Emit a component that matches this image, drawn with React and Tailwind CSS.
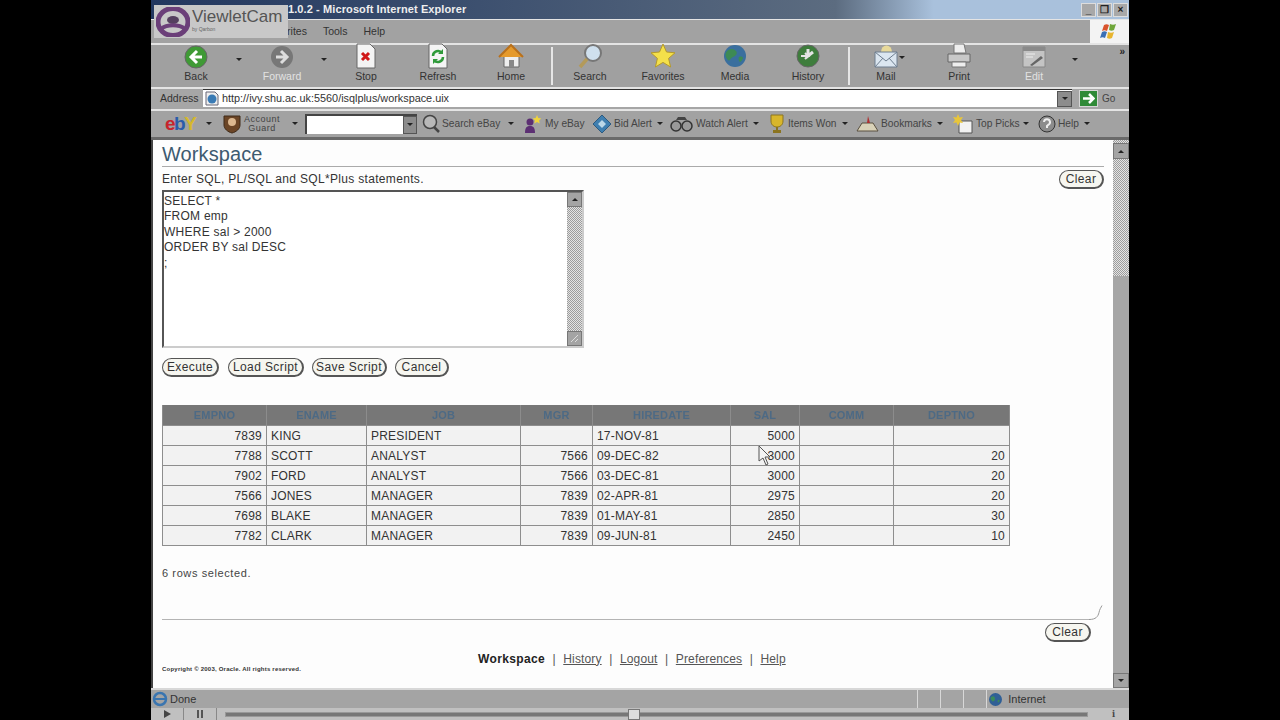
import React from "react";

const sans = "font-['Liberation_Sans',Arial,sans-serif]";

const cols = [104, 100, 154, 72, 138, 69, 94, 116];
const headers = ["EMPNO", "ENAME", "JOB", "MGR", "HIREDATE", "SAL", "COMM", "DEPTNO"];
const rows = [
  ["7839", "KING", "PRESIDENT", "", "17-NOV-81", "5000", "", ""],
  ["7788", "SCOTT", "ANALYST", "7566", "09-DEC-82", "3000", "", "20"],
  ["7902", "FORD", "ANALYST", "7566", "03-DEC-81", "3000", "", "20"],
  ["7566", "JONES", "MANAGER", "7839", "02-APR-81", "2975", "", "20"],
  ["7698", "BLAKE", "MANAGER", "7839", "01-MAY-81", "2850", "", "30"],
  ["7782", "CLARK", "MANAGER", "7839", "09-JUN-81", "2450", "", "10"],
];
const rightAligned = [0, 3, 5, 6, 7];

function Caret({ className = "" }) {
  return <span className={`inline-block w-0 h-0 border-l-[3px] border-r-[3px] border-t-[3px] border-l-transparent border-r-transparent border-t-[#222] ${className}`} />;
}

/* main toolbar icons */
const BackIcon = ({ fill = "#3f9a35" }) => (
  <svg width="24" height="24" viewBox="0 0 24 24">
    <circle cx="12" cy="12" r="11" fill={fill} stroke="#666" />
    <path d="M13 6l-6 6 6 6M7 12h11" fill="none" stroke="#fff" strokeWidth="3" />
  </svg>
);
const ForwardIcon = () => (
  <svg width="24" height="24" viewBox="0 0 24 24">
    <circle cx="12" cy="12" r="11" fill="#777" />
    <path d="M11 6l6 6-6 6M17 12H6" fill="none" stroke="#ddd" strokeWidth="3" />
  </svg>
);
const StopIcon = () => (
  <svg width="22" height="26" viewBox="0 0 22 26">
    <path d="M2 1h13l5 5v19H2z" fill="#f4f4f4" stroke="#666" />
    <path d="M7 10l7 7M14 10l-7 7" stroke="#d01818" strokeWidth="3" />
  </svg>
);
const RefreshIcon = () => (
  <svg width="22" height="26" viewBox="0 0 22 26">
    <path d="M2 1h13l5 5v19H2z" fill="#f4f4f4" stroke="#666" />
    <path d="M6 13a5 5 0 0 1 9-3M16 14a5 5 0 0 1-9 3" fill="none" stroke="#2f9a3a" strokeWidth="2.5" />
    <path d="M16 6v5h-5zM6 21v-5h5z" fill="#2f9a3a" />
  </svg>
);
const HomeIcon = () => (
  <svg width="26" height="26" viewBox="0 0 26 26">
    <path d="M6 12v12h15V12z" fill="#eee" stroke="#666" />
    <path d="M1 14L13 2l12 12" fill="#e59a2c" stroke="#b8701c" strokeWidth="2" />
    <path d="M11 17h5v7h-5z" fill="#888" />
  </svg>
);
const SearchIcon = () => (
  <svg width="26" height="26" viewBox="0 0 26 26">
    <circle cx="16" cy="10" r="8" fill="#cfe0ee" stroke="#777" strokeWidth="2" />
    <path d="M10 16l-7 8" stroke="#b39a5a" strokeWidth="3.5" />
  </svg>
);
const StarIcon = () => (
  <svg width="26" height="26" viewBox="0 0 26 26">
    <path d="M13 1l3.5 8 8.5.8-6.4 5.6 2 8.6-7.6-4.6L5.400 24l2-8.600L1 9.800 9.500 9z" fill="#f4e04a" stroke="#b59a2a" />
  </svg>
);
const MediaIcon = () => (
  <svg width="26" height="26" viewBox="0 0 26 26">
    <circle cx="13" cy="13" r="11" fill="#3a6f9e" />
    <path d="M5 8c4-3 7-2 9 0s0 5-3 6-3 5-5 3-4-6-1-9zM17 14c2-1 4 0 4 1s-2 4-3 4-2-4-1-5z" fill="#3d8a55" />
  </svg>
);
const HistoryIcon = () => (
  <svg width="26" height="26" viewBox="0 0 26 26">
    <circle cx="13" cy="13" r="11" fill="#3e7d3c" stroke="#666" />
    <path d="M13 6v7l5-4" fill="none" stroke="#e4e4e4" strokeWidth="3" />
    <path d="M6 13h7l-3-3M13 13l-3 3" fill="none" stroke="#e4e4e4" strokeWidth="2" />
  </svg>
);
const MailIcon = () => (
  <svg width="26" height="26" viewBox="0 0 26 26">
    <path d="M8 9a5 6 0 0 1 11 0z" fill="#e8d99a" />
    <path d="M2 9h22v15H2z" fill="#dbe6f0" stroke="#6f7f90" />
    <path d="M2 9l11 9 11-9M2 24l8-9M24 24l-8-9" fill="none" stroke="#6f7f90" />
  </svg>
);
const PrintIcon = () => (
  <svg width="26" height="26" viewBox="0 0 26 26">
    <path d="M8 1h10l2 9H8z" fill="#eee" stroke="#777" />
    <path d="M2 11h22v8H2z" fill="#c8c8c8" stroke="#666" />
    <path d="M6 19h14v5H6z" fill="#eee" stroke="#777" />
  </svg>
);
const EditIcon = () => (
  <svg width="24" height="24" viewBox="0 0 24 24">
    <path d="M1 2h22v20H1z" fill="#c4c4c4" stroke="#888" />
    <path d="M1 2h22v4H1z" fill="#8a8a8a" />
    <path d="M4 9h9M4 12h7" stroke="#eee" />
    <path d="M8 20l11-9 2 2-11 8z" fill="#666" />
  </svg>
);

function ToolButton({ icon, label, dim, caret, className = "" }) {
  return (
    <div className={`relative w-[72px] h-full flex flex-col items-center justify-end shrink-0 ${className}`}>
      <div className="h-[26px] flex items-center justify-center">{icon}</div>
      {caret && <Caret className="absolute left-[49px] top-[11px]" />}
      <span className={`text-[10.5px] leading-[13px] mt-[1px] mb-[4px] ${dim ? "text-[#e2e2e2]" : "text-[#333]"}`}>{label}</span>
    </div>
  );
}

function Seam({ className = "w-[14px]" }) {
  return <div className={`${className} shrink-0 flex justify-center pb-[14px]`}><Caret /></div>;
}

function Divider({ className = "" }) {
  return <div className={`w-[2px] h-[38px] bg-[#e6e6e6] shrink-0 ${className}`} />;
}

/* link bar items */
function LinkItem({ label, caret = true, caretGap = "ml-[5px]" }) {
  return (
    <div className="flex items-center shrink-0">
      <span className="text-[10.2px] text-[#444] whitespace-nowrap">{label}</span>
      {caret && <Caret className={caretGap} />}
    </div>
  );
}

function PillButton({ children, className = "" }) {
  return (
    <div className={`h-[19px] flex items-center justify-center rounded-full border border-[#555] border-r-2 border-b-2 bg-[#f6f6f0] text-[12px] tracking-[0.4px] text-[#333] shrink-0 ${className}`}>
      {children}
    </div>
  );
}

const dither = "bg-[repeating-conic-gradient(#9c9c9c_0_25%,#e4e4e4_0_50%)] bg-[length:2px_2px]";

function ScrollBox({ children, className = "" }) {
  return <div className={`flex items-center justify-center bg-[#a4a4a4] border border-[#777] ${className}`}>{children}</div>;
}

function Logo() {
  return (
    <div className="absolute left-[154px] top-[5px] w-[134px] h-[33px] bg-[#c8c8c8] flex items-center pl-[2px]">
      <svg width="34" height="30" viewBox="0 0 34 30">
        <ellipse cx="17" cy="15" rx="15" ry="13.500" fill="none" stroke="#6b3f79" strokeWidth="5" />
        <ellipse cx="17" cy="13" rx="6" ry="4" fill="#55405f" />
        <path d="M5 22c6-5 18-5 24 0" fill="none" stroke="#6b3f79" strokeWidth="4" />
      </svg>
      <div className="ml-[2px] -mt-[5px] flex flex-col">
        <span className="text-[17px] leading-[20px] text-[#555]">ViewletCam</span>
        <span className="text-[5px] leading-[5px] text-[#666]">by Qarbon</span>
      </div>
    </div>
  );
}

export default function App() {
  return (
    <div className={`relative w-[1280px] h-[720px] overflow-hidden bg-black flex justify-center ${sans}`}>
      <div className="w-[978px] h-full flex flex-col">
        {/* Title bar */}
        <div className="h-[19px] shrink-0 flex items-center justify-between pl-[137px] pr-[1px] bg-gradient-to-r from-[#22375f] via-[#5c6c80] via-70% to-[#a9c1dc] to-80%">
          <span className="text-[11px] font-bold text-[#eee] tracking-[0.1px]">1.0.2 - Microsoft Internet Explorer</span>
          <div className="flex gap-[1px]">
            {["_", "❐", "×"].map((c) => (
              <div key={c} className="w-[15px] h-[14px] bg-[#a8a8a8] border border-[#ddd] flex items-center justify-center text-[10px] leading-none font-bold text-[#222]">{c}</div>
            ))}
          </div>
        </div>

        {/* Menu bar */}
        <div className="h-[24px] shrink-0 flex items-center justify-between bg-[#a2a2a2] border-t border-[#e4e4e4]">
          <div className="flex text-[10.5px] text-[#333] pl-[125px] gap-[16px]">
            <span>vorites</span>
            <span>Tools</span>
            <span>Help</span>
          </div>
          <div className="w-[39px] h-full bg-[#f3f3f3] flex items-center justify-center">
            <svg width="20" height="18" viewBox="0 0 20 18">
              <path d="M4 2c2-1 3-1 5 0L7 8C5 7 4 7 2 8z" fill="#d9532c" />
              <path d="M10 1c2 1 4 1 6 0l-2 6c-2 1-3 1-5 0z" fill="#6fa63a" />
              <path d="M2 9c2-1 3-1 5 0l-2 6c-2-1-3-1-5 0z" fill="#3b6fb5" />
              <path d="M8 9c2 1 4 1 6 0l-2 6c-2 1-3 1-5 0z" fill="#e8b52f" />
            </svg>
          </div>
        </div>

        {/* Main toolbar */}
        <div className="relative h-[44px] shrink-0 flex items-center bg-[#a0a0a0] border-t-2 border-[#e4e4e4] pl-[9px]">
          <ToolButton icon={<BackIcon />} label="Back" />
          <Seam />
          <ToolButton icon={<ForwardIcon />} label="Forward" dim />
          <Seam className="w-[12px]" />
          <ToolButton icon={<StopIcon />} label="Stop" />
          <ToolButton icon={<RefreshIcon />} label="Refresh" />
          <ToolButton icon={<HomeIcon />} label="Home" className="ml-[1px]" />
          <Divider className="ml-[4px]" />
          <ToolButton icon={<SearchIcon />} label="Search" className="ml-[1px]" />
          <ToolButton icon={<StarIcon />} label="Favorites" className="ml-[1px]" />
          <ToolButton icon={<MediaIcon />} label="Media" />
          <ToolButton icon={<HistoryIcon />} label="History" className="ml-[1px]" />
          <Divider className="ml-[4px]" />
          <ToolButton icon={<MailIcon />} label="Mail" caret />
          <ToolButton icon={<PrintIcon />} label="Print" className="ml-[1px]" />
          <ToolButton icon={<EditIcon />} label="Edit" dim className="ml-[3px]" />
          <Seam className="w-[14px] -ml-[2px]" />
          <span className="absolute right-[4px] top-[2px] text-[10px] font-bold leading-none text-[#222]">»</span>
        </div>

        {/* Address bar */}
        <div className="h-[22px] shrink-0 flex items-center bg-[#a6a6a6] border-t-2 border-[#e4e4e4] pl-[9px]">
          <span className="w-[43px] -mt-[1px] text-[10.5px] text-[#333]">Address</span>
          <div className="w-[869px] h-[18px] self-start flex items-center bg-white border-t border-[#333]">
            <svg className="ml-[1px]" width="16" height="15" viewBox="0 0 16 15">
              <path d="M2 1h9l3 3v10H2z" fill="#eee" stroke="#667" />
              <circle cx="8" cy="8" r="4.500" fill="#3a7bb5" />
            </svg>
            <span className="ml-[2px] text-[10.85px] text-[#333]">http://ivy.shu.ac.uk:5560/isqlplus/workspace.uix</span>
            <div className="ml-auto w-[15px] h-[16px] bg-[#8c8c8c] border border-[#555] flex items-center justify-center"><Caret /></div>
          </div>
          <div className="ml-[7px] -mt-[1px] w-[19px] h-[17px] bg-[#2f8a37] border border-[#d6d6d6] flex items-center justify-center">
            <svg width="13" height="11" viewBox="0 0 13 11"><path d="M7 1l4.500 4.500L7 10M11 5.500H1" fill="none" stroke="#fff" strokeWidth="2.500" /></svg>
          </div>
          <span className="ml-[4px] -mt-[1px] text-[10px] text-[#444]">Go</span>
        </div>

        {/* eBay toolbar */}
        <div className="h-[31px] shrink-0 flex items-center bg-[#a2a2a2] border-t-2 border-[#e4e4e4] border-b-[3px] border-b-[#6a6a6a] pb-[1px] pl-[14px]">
          <div className="w-[44px] shrink-0 flex items-center text-[19px] font-bold leading-none tracking-[-1.5px]">
            <span className="text-[#c8242c]">e</span><span className="text-[#2a5caa]">b</span><span className="text-[#d4b82c]">Y</span>
            <Caret className="ml-[11px] shrink-0" />
          </div>
          <svg className="ml-[14px] shrink-0" width="18" height="20" viewBox="0 0 18 20">
            <path d="M1 2h16v9c0 4-4 7-8 8-4-1-8-4-8-8z" fill="#6b4526" stroke="#3f2a18" />
            <circle cx="9" cy="8" r="4" fill="#dcb890" />
          </svg>
          <div className="w-[38px] ml-[2px] shrink-0 text-[9px] leading-[9px] tracking-[0.5px] text-[#444] text-center">Account<br />Guard</div>
          <Caret className="ml-[11px] shrink-0" />
          <div className="ml-[7px] w-[112px] h-[20px] shrink-0 flex bg-white border-t-2 border-l-2 border-[#444]">
            <div className="ml-auto w-[14px] h-full bg-[#8c8c8c] border border-[#555] flex items-center justify-center"><Caret /></div>
          </div>
          <svg className="ml-[5px] shrink-0" width="18" height="20" viewBox="0 0 18 20">
            <circle cx="8" cy="8" r="6.500" fill="#b8b8b8" stroke="#444" strokeWidth="1.500" />
            <path d="M12 13l5 5" stroke="#444" strokeWidth="2.500" />
          </svg>
          <div className="ml-[2px] w-[78px] shrink-0"><LinkItem label="Search eBay" caretGap="ml-[8px]" /></div>
          <svg className="ml-[3px] shrink-0" width="19" height="20" viewBox="0 0 19 20">
            <circle cx="7" cy="8" r="3.500" fill="#5c2f73" />
            <path d="M2 19c0-6 2-7 5-7s5 1 5 7z" fill="#5c2f73" />
            <path d="M14 1l1.300 3 3 .4-2.200 2 .6 3-2.700-1.500-2.700 1.500.6-3-2.200-2 3-.4z" fill="#f0d43c" />
          </svg>
          <div className="ml-[3px] w-[47px] shrink-0"><LinkItem label="My eBay" caret={false} /></div>
          <svg className="shrink-0" width="20" height="20" viewBox="0 0 20 20">
            <path d="M10 1l9 9-9 9-9-9z" fill="#3f7fb0" stroke="#2c5a80" />
            <path d="M6 10l4-4 4 4-4 4z" fill="#bcd8e8" />
          </svg>
          <div className="ml-[2px] w-[56px] shrink-0"><LinkItem label="Bid Alert" /></div>
          <svg className="shrink-0" width="23" height="16" viewBox="0 0 23 16">
            <circle cx="6" cy="10" r="5" fill="#999" stroke="#333" strokeWidth="1.500" />
            <circle cx="17" cy="10" r="5" fill="#999" stroke="#333" strokeWidth="1.500" />
            <path d="M6 4l2-3h7l2 3z" fill="#444" />
          </svg>
          <div className="ml-[3px] w-[72px] shrink-0"><LinkItem label="Watch Alert" /></div>
          <svg className="shrink-0" width="18" height="20" viewBox="0 0 18 20">
            <path d="M3 1h12v6c0 4-3 6-6 6s-6-2-6-6z" fill="#d8b62c" stroke="#8b7420" />
            <path d="M8 13h2v3h3v3H5v-3h3z" fill="#8b7420" />
          </svg>
          <div className="ml-[2px] w-[68px] shrink-0"><LinkItem label="Items Won" /></div>
          <svg className="shrink-0" width="23" height="18" viewBox="0 0 23 18">
            <path d="M1 16L6 8h11l5 8z" fill="#d9d2b8" stroke="#5a5040" />
            <path d="M11 8l1-7 2 7z" fill="#b03030" />
          </svg>
          <div className="ml-[2px] w-[72px] shrink-0"><LinkItem label="Bookmarks" /></div>
          <svg className="shrink-0" width="20" height="20" viewBox="0 0 20 20">
            <path d="M6 7h13v12H6z" fill="#f2f2f2" stroke="#555" />
            <path d="M5 0l1.500 3.500L10 3 8 6l2 3-3.500-.5L5 12 3.500 8.500 0 9l2-3-2-3 3.500.5z" fill="#e8c53a" />
          </svg>
          <div className="ml-[3px] w-[62px] shrink-0"><LinkItem label="Top Picks" caretGap="ml-[3px]" /></div>
          <svg className="shrink-0" width="18" height="18" viewBox="0 0 18 18">
            <circle cx="9" cy="9" r="8" fill="#8c8c8c" stroke="#333" />
            <path d="M6 7a3 3 0 1 1 4 3l-1 1v2" fill="none" stroke="#eee" strokeWidth="2" />
          </svg>
          <div className="ml-[2px]"><LinkItem label="Help" /></div>
        </div>

        {/* Page and scrollbar */}
        <div className="flex-1 min-h-0 flex border-l-2 border-[#444] bg-[#fdfdfd]">
          <div className="flex-1 min-w-0 flex flex-col pl-[9px] pr-[9px]">
            <h1 className="h-[25px] mt-[2px] shrink-0 text-[20px] leading-[25px] tracking-[0.1px] text-[#3d5a70] border-b border-[#aaa]">Workspace</h1>

            <div className="mt-[2px] h-[20px] shrink-0 flex items-center justify-between">
              <span className="text-[12px] tracking-[0.32px] text-[#333]">Enter SQL, PL/SQL and SQL*Plus statements.</span>
              <PillButton className="w-[45px]">Clear</PillButton>
            </div>

            <div className="mt-[1px] w-[422px] h-[158px] shrink-0 flex bg-white border-2 border-[#555] border-r-[#ccc] border-b-[#ccc]">
              <pre className={`flex-1 pt-[2px] text-[12px] leading-[15.4px] tracking-[0.25px] text-[#333] ${sans}`}>{"SELECT *\nFROM emp\nWHERE sal > 2000\nORDER BY sal DESC\n;"}</pre>
              <div className={`w-[15px] flex flex-col justify-between ${dither}`}>
                <ScrollBox className="h-[15px]"><Caret className="rotate-180" /></ScrollBox>
                <ScrollBox className="h-[15px] bg-[#777]">
                  <svg width="9" height="9" viewBox="0 0 9 9"><path d="M1 8l7-7M5 8l3-3" stroke="#ddd" /></svg>
                </ScrollBox>
              </div>
            </div>

            <div className="mt-[10px] flex shrink-0">
              <PillButton className="w-[57px]">Execute</PillButton>
              <PillButton className="w-[76px] ml-[9px]">Load Script</PillButton>
              <PillButton className="w-[75px] ml-[8px]">Save Script</PillButton>
              <PillButton className="w-[54px] ml-[8px]">Cancel</PillButton>
            </div>

            {/* Result table */}
            <table className="mt-[28px] w-[847px] shrink-0 table-fixed border-collapse text-[12px] tracking-[0.2px] text-[#333]">
              <colgroup>
                {cols.map((w, i) => <col key={i} style={{ width: w }} />)}
              </colgroup>
              <thead>
                <tr className="h-[20px] bg-[#777]">
                  {headers.map((h) => (
                    <th key={h} className="border-x border-[#8c8c8c] p-0 text-center text-[11px] font-bold tracking-[0.2px] text-[#4d6a85] blur-[0.4px]">{h}</th>
                  ))}
                </tr>
              </thead>
              <tbody>
                {rows.map((row) => (
                  <tr key={row[0]} className="h-[20px] bg-[#f2f2f2]">
                    {row.map((cell, i) => (
                      <td key={i} className={`border border-[#8e8e8e] px-[4px] pt-[1px] pb-0 leading-none ${rightAligned.includes(i) ? "text-right" : "text-left"}`}>{cell}</td>
                    ))}
                  </tr>
                ))}
              </tbody>
            </table>

            <p className="mt-[20px] h-[14px] shrink-0 text-[11px] leading-[14px] tracking-[0.6px] text-[#444]">6 rows selected.</p>

            {/* Bottom rule with the curled end */}
            <div className="relative mt-[39px] w-[928px] h-[1px] shrink-0 bg-[#b4b4b4]">
              <svg className="absolute right-[-13px] bottom-0" width="14" height="16" viewBox="0 0 14 16">
                <path d="M0 15.500c7 0 9-3 10-7 .5-3 2-5 3-7" fill="none" stroke="#999" />
              </svg>
            </div>
            <div className="mt-[3px] w-[929px] flex justify-end shrink-0">
              <PillButton className="w-[46px]">Clear</PillButton>
            </div>

            {/* Footer links */}
            <div className="mt-[9px] flex items-start shrink-0">
              <span className="mt-[14px] w-[316px] shrink-0 text-[6px] font-bold leading-[8px] tracking-[0.22px] text-[#333] whitespace-nowrap">Copyright © 2003, Oracle. All rights reserved.</span>
              <div className="flex items-center text-[12px] leading-[16px] tracking-[0.15px] text-[#555]">
                <span className="font-bold tracking-[0.35px] text-[#222]">Workspace</span>
                <span className="mx-[7.5px]">|</span>
                <span className="underline">History</span>
                <span className="mx-[7.5px]">|</span>
                <span className="underline">Logout</span>
                <span className="mx-[7.5px]">|</span>
                <span className="underline">Preferences</span>
                <span className="mx-[7.5px]">|</span>
                <span className="underline">Help</span>
              </div>
            </div>
          </div>

          <div className={`w-[16px] shrink-0 flex flex-col ${dither}`}>
            <ScrollBox className="h-[16px] mt-[3px] bg-[#888]"><Caret className="rotate-180" /></ScrollBox>
            <div className="h-[117px]" />
            <div className="flex-1 bg-[#a6a6a6]" />
            <ScrollBox className="h-[15px]"><Caret /></ScrollBox>
          </div>
        </div>

        {/* Status bar */}
        <div className="h-[20px] shrink-0 flex items-center bg-[#a4a4a4] border-t-2 border-[#d8d8d8]">
          <svg className="ml-[1px]" width="16" height="16" viewBox="0 0 16 16">
            <circle cx="8" cy="8" r="6" fill="none" stroke="#3a75b0" strokeWidth="2.500" />
            <path d="M2 8h12" stroke="#3a75b0" strokeWidth="2" />
          </svg>
          <span className="ml-[2px] text-[11px] text-[#333]">Done</span>
          <div className="ml-[721px] flex h-full">
            <div className="w-[23px] border-l border-[#d8d8d8]" />
            <div className="w-[23px] border-l border-[#d8d8d8]" />
            <div className="w-[23px] border-l border-[#d8d8d8]" />
            <div className="w-[2px] border-l border-[#d8d8d8]" />
          </div>
          <svg width="15" height="15" viewBox="0 0 15 15">
            <circle cx="7.500" cy="7.500" r="6.500" fill="#2f5f96" />
            <path d="M3 5c3-2 4 0 4 2s-2 3-3 2-2-3-1-4zM10 8c2-1 2 1 1 2s-2 0-1-2z" fill="#3a8a5a" />
          </svg>
          <span className="ml-[5px] text-[11px] text-[#333]">Internet</span>
        </div>

        {/* Media player strip */}
        <div className="h-[12px] shrink-0 flex items-center bg-[#c0c0c0] overflow-hidden">
          <div className="w-[33px] h-full flex items-center justify-center border-r border-[#888]">
            <span className="w-0 h-0 border-y-[4px] border-l-[7px] border-y-transparent border-l-[#444]" />
          </div>
          <div className="w-[33px] h-full flex items-center justify-center gap-[2px] border-r border-[#888]">
            <span className="w-[2px] h-[8px] bg-[#555]" />
            <span className="w-[2px] h-[8px] bg-[#555]" />
          </div>
          <div className="relative ml-[8px] w-[863px] h-[5px] bg-[#777] border border-[#999]">
            <div className="absolute left-[402px] -top-[4px] w-[12px] h-[11px] bg-[#ddd] border border-[#777]" />
          </div>
          <div className="ml-auto mr-[10px] w-[7px] h-[10px] text-[10px] leading-[10px] font-bold font-serif text-[#444]">i</div>
        </div>
      </div>

      <Logo />

      {/* Recorded mouse pointer */}
      <svg className="absolute left-[758px] top-[445px]" width="14" height="21" viewBox="0 0 14 21">
        <path d="M1 1v15l4-3 3 7 2-1-3-7h5z" fill="#f4f4f4" stroke="#555" />
      </svg>
    </div>
  );
}
